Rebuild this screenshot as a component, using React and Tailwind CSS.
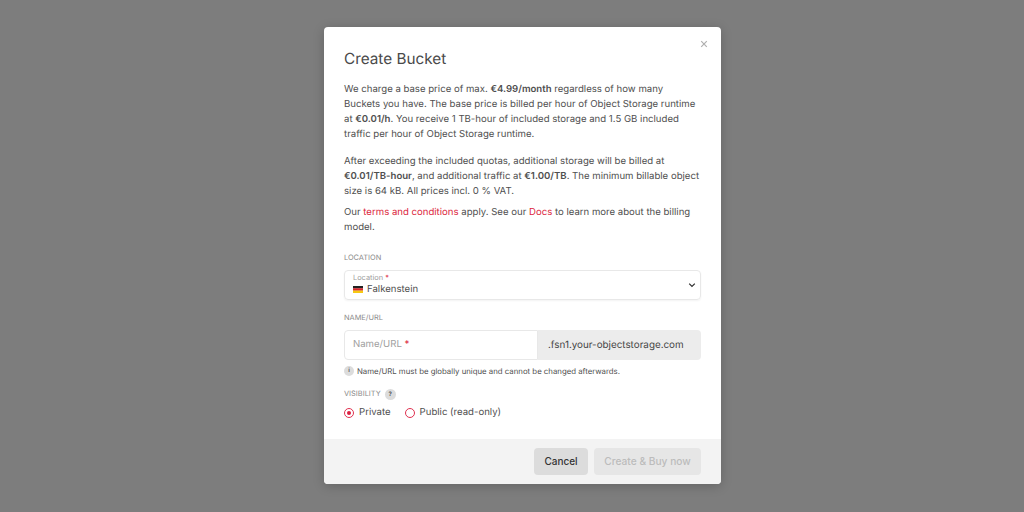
export default function App() {
  return (
    <div className="h-[512px] w-[1024px] bg-[#7d7d7d] flex items-center justify-center pl-[21px] pb-[1px] font-['Inter',sans-serif] text-[#4f4f4f] [text-rendering:geometricPrecision]">
      <div className="relative w-[397px] h-[457px] bg-white rounded-[4px] shadow-[0_2px_12px_rgba(0,0,0,0.2)] flex flex-col overflow-hidden">
        <button className="absolute top-[13px] right-[13px] text-[#b0b0b0] leading-none">
          <svg width="8" height="8" viewBox="0 0 10 10" fill="none" stroke="currentColor" strokeWidth="1.5"><path d="M1.5 1.5l7 7M8.5 1.5l-7 7" /></svg>
        </button>
        <div className="flex-1 px-5 pt-[22px]">
          <h2 className="text-[15.3px] leading-5 text-[#4a4a4a]">Create Bucket</h2>
          <div className="mt-[13px] text-[9.6px] leading-[15px]">
            <p>We charge a base price of max. <b className="font-semibold">€4.99/month</b> regardless of how many Buckets you have. The base price is billed per hour of Object Storage runtime at <b className="font-semibold">€0.01/h</b>. You receive 1 TB-hour of included storage and 1.5 GB included traffic per hour of Object Storage runtime.</p>
            <p className="mt-[12px]">After exceeding the included quotas, additional storage will be billed at <b className="font-semibold">€0.01/TB-hour</b>, and additional traffic at <b className="font-semibold">€1.00/TB</b>. The minimum billable object size is 64 kB. All prices incl. 0 % VAT.</p>
            <p className="mt-[6px]">Our <span className="text-[#dc1f40]">terms and conditions</span> apply. See our <span className="text-[#dc1f40]">Docs</span> to learn more about the billing model.</p>
          </div>
          <div className="mt-[17px] text-[7.4px] leading-[12px] text-[#8a8a8a] uppercase">Location</div>
          <div className="mt-[6px] h-[30px] border border-[#e8e8e8] rounded-[4px] shadow-[0_1px_2px_rgba(0,0,0,0.05)] flex items-center justify-between pl-2 pr-[4px]">
            <div className="-mt-[1px]">
              <div className="text-[7.4px] leading-[10px] text-[#a0a0a0]">Location <span className="text-[#dc1f40]">*</span></div>
              <div className="flex items-center gap-[4px] text-[9.6px] leading-[13px]">
                <svg width="10" height="7" viewBox="0 0 10 7"><rect width="10" height="2.4" fill="#222" /><rect y="2.3" width="10" height="2.4" fill="#d8262c" /><rect y="4.6" width="10" height="2.4" fill="#f6c913" /></svg>
                Falkenstein
              </div>
            </div>
            <svg width="8" height="8" viewBox="0 0 8 8" fill="none" stroke="#333" strokeWidth="1.3"><path d="M1.2 2.6L4 5.4l2.8-2.8" /></svg>
          </div>
          <div className="mt-[12px] text-[7.4px] leading-[12px] text-[#8a8a8a] uppercase">Name/URL</div>
          <div className="mt-[6px] h-[30px] flex text-[9.6px]">
            <div className="w-[194px] border border-[#e8e8e8] rounded-l-[4px] flex items-center pl-2 text-[#a0a0a0]">Name/URL&nbsp;<span className="text-[#dc1f40]">*</span></div>
            <div className="flex-1 bg-[#ececec] rounded-r-[4px] flex items-center pl-[10px] text-[9.85px] text-[#444]">.fsn1.your-objectstorage.com</div>
          </div>
          <div className="mt-[5px] flex items-center gap-[3px] text-[7.8px] leading-[12px]">
            <span className="w-[10px] h-[10px] rounded-full bg-[#dcdcdc] text-[#666] text-[6px] leading-[10px] text-center font-bold">i</span>
            Name/URL must be globally unique and cannot be changed afterwards.
          </div>
          <div className="mt-[11px] flex items-center gap-[4px] text-[7.4px] leading-[12px] text-[#8a8a8a] uppercase">
            Visibility
            <span className="w-[11px] h-[11px] rounded-full bg-[#dcdcdc] text-[#555] text-[6px] leading-[11px] text-center font-bold">?</span>
          </div>
          <div className="mt-[5px] flex items-center text-[9.6px] leading-[15px]">
            <span className="w-[10px] h-[10px] rounded-full border border-[#e0304f] flex items-center justify-center"><span className="w-[4px] h-[4px] rounded-full bg-[#dc1f40]" /></span>
            <span className="ml-[5px]">Private</span>
            <span className="ml-[14px] w-[10px] h-[10px] rounded-full border border-[#e0304f]" />
            <span className="ml-[5px]">Public (read-only)</span>
          </div>
        </div>
        <div className="h-[45px] bg-[#f3f3f3] flex items-center justify-end gap-[6px] px-5 text-[10px] font-medium">
          <button className="w-[54px] h-[27px] rounded-[4px] bg-[#dcdcdc] text-[#333]">Cancel</button>
          <button className="w-[107px] h-[27px] rounded-[4px] bg-[#e6e6e6] text-[10.2px] text-[#bcbcbc]">Create &amp; Buy now</button>
        </div>
      </div>
    </div>
  );
}
